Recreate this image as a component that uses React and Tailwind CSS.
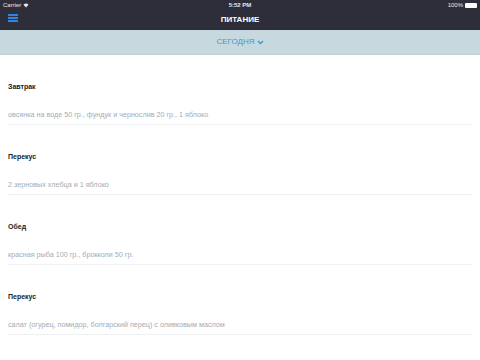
import React from "react";

const items = [
  { t: "Завтрак", d: "овсянка на воде 50 гр., фундук и чернослив 20 гр., 1 яблоко" },
  { t: "Перекус", d: "2 зерновых хлебца и 1 яблоко" },
  { t: "Обед", d: "красная рыба 100 гр., брокколи 50 гр." },
  { t: "Перекус", d: "салат (огурец, помидор, болгарский перец) с оливковым маслом" },
];

export default function App() {
  return (
    <div className="w-[480px] h-[360px] overflow-hidden bg-white" style={{ fontFamily: '"Liberation Sans", Arial, sans-serif' }}>
      <div className="bg-[#2e2e3a] h-[30px] flex flex-col">
        <div className="h-[10px] flex items-center justify-between px-[3px] text-[#e8e8ee] text-[6px] leading-[6px]">
          <div className="flex items-center gap-[2px] w-[60px]">
            <span>Carrier</span>
            <svg width="6" height="5" viewBox="0 0 6 5"><path d="M0.5 1.8 A3.5 3.5 0 0 1 5.5 1.8 L3 4.6 Z" fill="#e8e8ee" /></svg>
          </div>
          <span className="font-bold">5:52 PM</span>
          <div className="flex items-center justify-end gap-[2px] w-[60px]">
            <span>100%</span>
            <div className="w-[12px] h-[5px] bg-white rounded-[1px]" />
          </div>
        </div>
        <div className="relative h-[20px] flex items-center justify-center">
          <div className="absolute left-[8px] top-[4px] flex flex-col gap-[1.5px]">
            <div className="w-[10px] h-[1.5px] bg-[#2f86e0]" />
            <div className="w-[10px] h-[1.5px] bg-[#2f86e0]" />
            <div className="w-[10px] h-[1.5px] bg-[#2f86e0]" />
          </div>
          <span className="text-white font-bold text-[8px] leading-[8px]">ПИТАНИЕ</span>
        </div>
      </div>
      <div className="h-[25px] bg-[#c7d9de] flex items-center justify-center gap-[2px] border-b border-[#bccfd5]">
        <span className="text-[#3a9ad2] text-[8px] leading-[8px]">СЕГОДНЯ</span>
        <svg width="7" height="5" viewBox="0 0 7 5"><path d="M1 1 L3.5 3.5 L6 1" stroke="#3a9ad2" strokeWidth="1.4" fill="none" /></svg>
      </div>
      <div className="flex flex-col">
        {items.map((it, i) => (
          <div key={i} className="mx-[8px] pt-[28px] pb-[5px] border-b border-[#eef0f2]">
            <div className="text-[7px] leading-[8px] font-bold text-[#222]">{it.t}</div>
            <div className="mt-[20px] text-[7.2px] leading-[8px] text-[#a3abb3]">{it.d}</div>
          </div>
        ))}
      </div>
    </div>
  );
}
